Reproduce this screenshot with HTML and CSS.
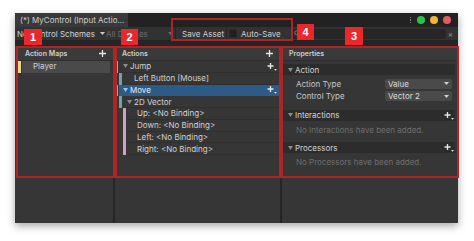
FILE: index.html
```html
<!DOCTYPE html>
<html>
<head>
<meta charset="utf-8">
<link rel="stylesheet" href="styles.css">
</head>
<body>
<div class="page">
  <div class="window">
    <div class="titlebar">
      <div class="tab">(*) MyControl (Input Actio...</div>
      <div class="title-fill"></div>
      <div class="dots"><i></i><i></i><i></i></div>
      <div class="lights">
        <span class="light green"></span>
        <span class="light yellow"></span>
        <span class="light red"></span>
      </div>
    </div>

    <div class="toolbar">
      <div class="dd schemes"><span>No Control Schemes</span><svg class="caret" viewBox="0 0 5 3"><path d="M0 0H5L2.5 3Z"/></svg></div>
      <div class="dd devices"><span>All Devices</span><svg class="caret" viewBox="0 0 5 3"><path d="M0 0H5L2.5 3Z"/></svg></div>
      <div class="tb-sep"></div>
      <div class="tb-btn">Save Asset</div>
      <div class="tb-sep"></div>
      <div class="tb-check"><span class="check"></span><span>Auto-Save</span></div>
      <div class="search"><svg class="mag" viewBox="0 0 8 8"><circle cx="3.2" cy="3.2" r="2.3"/><path d="M5 5L7.3 7.3"/></svg></div>
      <div class="search-x">×</div>
    </div>

    <div class="main">
      <section class="panel maps">
        <div class="panel-head"><span>Action Maps</span><svg class="plus" viewBox="0 0 7 7"><path d="M3.5 0V7M0 3.5H7"/></svg></div>
        <div class="row lvl0 selected-map"><span class="bar c-map"></span><span class="cell pl-map">Player</span></div>
      </section>

      <section class="panel actions">
        <div class="panel-head"><span>Actions</span><svg class="plus" viewBox="0 0 7 7"><path d="M3.5 0V7M0 3.5H7"/></svg></div>
        <div class="row lvl0"><span class="bar c-act"></span><span class="cell pl-fold"><svg class="tri" viewBox="0 0 5 4"><path d="M0 0H5L2.5 4Z"/></svg>Jump<svg class="plusdd" viewBox="0 0 10 9"><path class="pl" d="M3.5 1V7M0.5 4H6.5"/><path class="dd" d="M7 7H10L8.5 8.7Z"/></svg></span></div>
        <div class="row lvl1"><span class="bar c-bind"></span><span class="cell pl-leaf1">Left Button [Mouse]</span></div>
        <div class="row lvl0 selected-act"><span class="bar c-act"></span><span class="cell pl-fold"><svg class="tri" viewBox="0 0 5 4"><path d="M0 0H5L2.5 4Z"/></svg>Move<svg class="plusdd" viewBox="0 0 10 9"><path class="pl" d="M3.5 1V7M0.5 4H6.5"/><path class="dd" d="M7 7H10L8.5 8.7Z"/></svg></span></div>
        <div class="row lvl1"><span class="bar c-bind"></span><span class="cell pl-fold"><svg class="tri" viewBox="0 0 5 4"><path d="M0 0H5L2.5 4Z"/></svg>2D Vector</span></div>
        <div class="row lvl2"><span class="bar c-part"></span><span class="cell pl-leaf2">Up: &lt;No Binding&gt;</span></div>
        <div class="row lvl2"><span class="bar c-part"></span><span class="cell pl-leaf2">Down: &lt;No Binding&gt;</span></div>
        <div class="row lvl2"><span class="bar c-part"></span><span class="cell pl-leaf2">Left: &lt;No Binding&gt;</span></div>
        <div class="row lvl2"><span class="bar c-part"></span><span class="cell pl-leaf2">Right: &lt;No Binding&gt;</span></div>
      </section>

      <section class="panel props">
        <div class="panel-head"><span>Properties</span></div>
        <div class="props-body">
          <div class="section-head s-action"><svg class="tri" viewBox="0 0 5 4"><path d="M0 0H5L2.5 4Z"/></svg><span>Action</span></div>
          <div class="field f1"><span class="label">Action Type</span><div class="select"><span>Value</span><svg class="caret" viewBox="0 0 5 3"><path d="M0 0H5L2.5 3Z"/></svg></div></div>
          <div class="field f2"><span class="label">Control Type</span><div class="select"><span>Vector 2</span><svg class="caret" viewBox="0 0 5 3"><path d="M0 0H5L2.5 3Z"/></svg></div></div>
          <div class="section-head s-inter"><svg class="tri" viewBox="0 0 5 4"><path d="M0 0H5L2.5 4Z"/></svg><span>Interactions</span><svg class="plusdd" viewBox="0 0 10 9"><path class="pl" d="M3.5 1V7M0.5 4H6.5"/><path class="dd" d="M7 7H10L8.5 8.7Z"/></svg></div>
          <div class="empty">No Interactions have been added.</div>
          <div class="section-head s-proc"><svg class="tri" viewBox="0 0 5 4"><path d="M0 0H5L2.5 4Z"/></svg><span>Processors</span><svg class="plusdd" viewBox="0 0 10 9"><path class="pl" d="M3.5 1V7M0.5 4H6.5"/><path class="dd" d="M7 7H10L8.5 8.7Z"/></svg></div>
          <div class="empty">No Processors have been added.</div>
        </div>
      </section>
    </div>

    <div class="annot a1"></div>
    <div class="annot a2"></div>
    <div class="annot a3"></div>
    <div class="annot a4"></div>
    <div class="tag t1">1</div>
    <div class="tag t2">2</div>
    <div class="tag t3">3</div>
    <div class="tag t4">4</div>
  </div>
</div>
</body>
</html>
```

FILE: styles.css
```css
* { box-sizing: border-box; margin: 0; padding: 0; }

html, body {
  background: #ffffff;
  width: 474px;
  height: 241px;
  overflow: hidden;
}

body {
  font-family: Inter, "Noto Sans", "Liberation Sans", sans-serif;
  font-size: 8px;
  color: #d2d2d2;
}

.page { padding: 13px 0 0 15px; }

.window {
  position: relative;
  width: 443px;
  height: 210px;
  background: #252525;
  box-shadow: 0 3px 8px rgba(0, 0, 0, 0.35);
  display: flex;
  flex-direction: column;
}

/* title bar */
.titlebar {
  height: 14px;
  background: #222222;
  display: flex;
  align-items: center;
}
.tab {
  flex: none;
  height: 14px;
  line-height: 14px;
  padding: 0 4px 0 5px;
  background: #393939;
  color: #d0d0d0;
  white-space: nowrap;
}
.title-fill { flex: 1; }
.dots {
  display: flex;
  flex-direction: column;
  gap: 1px;
  margin-right: 6px;
}
.dots i {
  display: block;
  width: 1.4px;
  height: 1.4px;
  background: #9a9a9a;
  border-radius: 50%;
}
.lights { display: flex; gap: 5px; margin-right: 7px; }
.light { width: 8px; height: 8px; border-radius: 50%; }
.light.green { background: #2ac34a; }
.light.yellow { background: #efb62f; }
.light.red { background: #e85b5b; }

/* toolbar */
.toolbar {
  height: 14px;
  background: #323232;
  display: flex;
  align-items: center;
  border-bottom: 1px solid #242424;
}
.dd {
  display: flex;
  align-items: center;
  height: 14px;
  white-space: nowrap;
}
.dd .caret { width: 5px; height: 3px; fill: #c8c8c8; }
.schemes { width: 90px; padding-left: 2px; color: #d2d2d2; }
.schemes .caret { margin-left: 5px; }
.devices { width: 70px; padding-left: 1px; padding-right: 2px; color: #6c6c6c; }
.devices .caret { margin-left: auto; fill: #6c6c6c; }
.tb-sep { width: 1px; height: 14px; background: #262626; }
.tb-btn {
  margin-left: 4px;
  width: 46px;
  padding-left: 2px;
  color: #d0d0d0;
  white-space: nowrap;
}
.tb-check {
  display: flex;
  align-items: center;
  margin-left: 2px;
  color: #d0d0d0;
  white-space: nowrap;
}
.check {
  width: 8px;
  height: 9px;
  background: #1f1f1f;
  border: 1px solid #2a2a2a;
  border-radius: 1px;
  margin-right: 4px;
}
.search {
  margin-left: auto;
  width: 154px;
  height: 10px;
  background: #262626;
  border-radius: 2px;
  display: flex;
  align-items: center;
  padding-left: 2px;
}
.mag { width: 7px; height: 7px; fill: none; stroke: #8a8a8a; stroke-width: 1; }
.search-x {
  width: 9px;
  margin-right: 3px;
  text-align: center;
  color: #9a9a9a;
  font-size: 8px;
  line-height: 10px;
}

/* main area */
.main {
  flex: 1;
  display: flex;
  gap: 2px;
  padding-top: 5px;
  background: #252525;
}
.panel {
  background: #363636;
  display: flex;
  flex-direction: column;
}
.maps { width: 98px; }
.actions { width: 165px; }
.props { flex: 1; }

.panel-head {
  height: 15px;
  flex: none;
  display: flex;
  align-items: center;
  background: #3a3a3a;
  border-bottom: 1px solid #2e2e2e;
  font-size: 7px;
  font-weight: 600;
  color: #cfcfcf;
  padding-left: 7px;
  padding-right: 7px;
}
.maps .panel-head { padding-left: 10px; padding-right: 7px; }
.panel-head .plus {
  margin-left: auto;
  width: 7px;
  height: 7px;
  stroke: #e6e6e6;
  stroke-width: 1.3;
}

/* tree rows */
.row {
  height: 11.75px;
  flex: none;
  display: flex;
}
.row.lvl1 { padding-left: 4px; }
.row.lvl2 { padding-left: 8px; }
.maps .row { padding-left: 3px; padding-right: 3px; }
.bar { width: 3px; flex: none; }
.c-map { background: #e4dc8c; }
.c-act { background: linear-gradient(90deg, #d9bf6e 0 50%, #7dbb8d 50% 100%); }
.c-bind { background: #66a9aa; }
.c-part { background: #d49fc6; }
.cell {
  flex: 1;
  margin-left: 1px;
  display: flex;
  align-items: center;
  border-bottom: 1px solid #2f2f2f;
  white-space: nowrap;
  color: #d2d2d2;
}
.pl-map { padding-left: 11px; }
.pl-fold { padding-left: 4px; }
.pl-leaf1 { padding-left: 11px; }
.pl-leaf2 { padding-left: 10px; }
.selected-map .cell { background: #4a4a4a; border-bottom-color: #4a4a4a; }
.selected-act .cell { background: #2d5b87; border-bottom-color: #2d5b87; color: #e4eefa; }
.selected-act .tri { fill: #9cc2e8; }

.tri {
  width: 5px;
  height: 4px;
  fill: #8c8c8c;
  margin-right: 2px;
  flex: none;
}
.plusdd {
  width: 10px;
  height: 9px;
  margin-left: auto;
  margin-right: 3px;
  flex: none;
}
.plusdd .pl { stroke: #e6e6e6; stroke-width: 1.3; fill: none; }
.plusdd .dd { fill: #e6e6e6; }

/* properties */
.props-body { padding: 0 3px 0 1px; }
.section-head {
  height: 11px;
  display: flex;
  align-items: center;
  background: #2c2c2c;
  padding-left: 5px;
  color: #d4d4d4;
  font-size: 8px;
}
.section-head .plusdd { margin-right: 1px; }
.s-action { margin-top: 3px; }
.s-inter { margin-top: 8px; }
.s-proc { margin-top: 6.5px; }
.field {
  height: 11px;
  display: flex;
  align-items: center;
  padding-left: 13px;
  color: #c8c8c8;
}
.f1 { margin-top: 3px; }
.f2 { margin-top: 1.5px; }
.field .label { width: 89px; white-space: nowrap; }
.select {
  width: 67px;
  height: 10px;
  background: #4a4a4a;
  border-radius: 2px;
  display: flex;
  align-items: center;
  padding: 0 3px;
  color: #dcdcdc;
}
.select .caret { margin-left: auto; width: 5px; height: 3px; fill: #d0d0d0; }
.empty {
  height: 12px;
  line-height: 12px;
  margin-top: 3px;
  padding-left: 13px;
  color: #6e6e6e;
  white-space: nowrap;
}

/* annotations (overlay) */
.annot {
  position: absolute;
  border: 2px solid #ad2527;
  pointer-events: none;
}
.a1 { left: 1px; top: 33px; width: 99px; height: 132px; }
.a2 { left: 100px; top: 33px; width: 166px; height: 132px; }
.a3 { left: 266px; top: 33px; width: 178px; height: 132px; }
.a4 { left: 156px; top: 5px; width: 122px; height: 23px; }

.tag {
  position: absolute;
  background: #e8282b;
  color: #ffffff;
  font-family: "Liberation Sans", Arial, sans-serif;
  font-weight: 700;
  font-size: 11px;
  text-align: center;
}
.t1 { left: 9px; top: 16px; width: 18px; height: 16px; line-height: 16px; }
.t2 { left: 106px; top: 16px; width: 17px; height: 16px; line-height: 16px; }
.t3 { left: 330px; top: 14px; width: 18px; height: 18px; line-height: 18px; }
.t4 { left: 282px; top: 11px; width: 17px; height: 16px; line-height: 16px; }
```
